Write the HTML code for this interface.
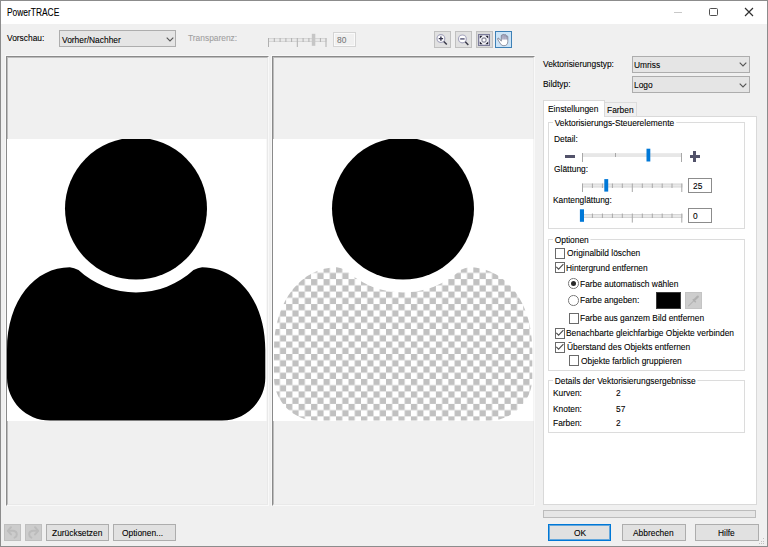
<!DOCTYPE html>
<html><head><meta charset="utf-8">
<style>
*{box-sizing:border-box;margin:0;padding:0}
html,body{width:768px;height:547px;overflow:hidden;background:#f0f0f0}
body{position:relative;font-family:"Liberation Sans",sans-serif;font-size:8.4px;color:#000;-webkit-text-stroke:0.1px currentColor}
.a{position:absolute}
.t{position:absolute;white-space:nowrap;line-height:10px;height:10px;font-size:9.9px;transform-origin:0 0;transform:scaleX(.85)}
.btn{position:absolute;background:#e1e1e1;border:1px solid #adadad}
.cb{position:absolute;background:#e5e5e5;border:1px solid #adadad}
.chk{position:absolute;width:10.5px;height:10.5px;border:1.3px solid #6a6a6a;background:#fff}
.rad{position:absolute;width:10.5px;height:10.5px;border:1.4px solid #7a7a7a;border-radius:50%;background:#fff}
.grp{position:absolute;border:1px solid #dcdcdc}
.gl{position:absolute;background:#fff;padding:0 2px;line-height:10px;height:10px;white-space:nowrap;font-size:9.9px;transform-origin:0 0;transform:scaleX(.85)}
</style></head><body>
<!-- window frame -->
<div class="a" style="left:0;top:0;width:768px;height:547px;border:1px solid #8c8c8c"></div>
<div class="a" style="left:1px;top:1px;width:766px;height:23px;background:#fff"></div>
<div class="t" style="left:7px;top:8px;font-size:10px;transform:scaleX(.84)">PowerTRACE</div>
<!-- title buttons -->
<div class="a" style="left:674px;top:12px;width:8px;height:1px;background:#c8c8c8"></div>
<div class="a" style="left:709.2px;top:7.5px;width:8.6px;height:8.3px;border:1.3px solid #505050;border-radius:1.5px"></div>
<svg class="a" style="left:744px;top:7px" width="10" height="10" viewBox="0 0 10 10"><path d="M1 1L9 9M9 1L1 9" stroke="#303030" stroke-width="1.15"/></svg>

<!-- toolbar -->
<div class="t" style="left:7px;top:33px">Vorschau:</div>
<div class="cb" style="left:59px;top:30px;width:117px;height:17px"></div>
<div class="t" style="left:62px;top:35px">Vorher/Nachher</div>
<svg class="a" style="left:165.5px;top:37px" width="8" height="5" viewBox="0 0 8 5"><path d="M0.7 0.6L4 3.9L7.3 0.6" stroke="#555" stroke-width="1.1" fill="none"/></svg>
<div class="t" style="left:188px;top:33px;color:#a0a0a0">Transparenz:</div>

<!-- panes -->
<div class="a" style="left:5px;top:55px;width:265px;height:452px;border:1px solid;border-color:#f8f8f8 #f0f0f0 #f0f0f0 #f8f8f8"></div>
<div class="a" style="left:6px;top:56px;width:263px;height:450px;border:1px solid;border-color:#8a8a8a #f9f9f9 #f9f9f9 #8a8a8a"></div>
<div class="a" style="left:7px;top:57px;width:261px;height:448px;border:1px solid;border-color:#bdbdbd #e9e9e9 #e9e9e9 #bdbdbd"></div>
<div class="a" style="left:271px;top:55px;width:265px;height:452px;border:1px solid;border-color:#f8f8f8 #f0f0f0 #f0f0f0 #f8f8f8"></div>
<div class="a" style="left:272px;top:56px;width:263px;height:450px;border:1px solid;border-color:#8a8a8a #f9f9f9 #f9f9f9 #8a8a8a"></div>
<div class="a" style="left:273px;top:57px;width:261px;height:448px;border:1px solid;border-color:#bdbdbd #e9e9e9 #e9e9e9 #bdbdbd"></div>

<!-- right panel -->
<div class="t" style="left:543px;top:59px">Vektorisierungstyp:</div>
<div class="cb" style="left:632px;top:56px;width:118px;height:17px"></div>
<div class="t" style="left:634px;top:60px">Umriss</div>
<div class="t" style="left:543px;top:79px">Bildtyp:</div>
<div class="cb" style="left:632px;top:76px;width:118px;height:17px"></div>
<div class="t" style="left:634px;top:80px">Logo</div>

<!-- tab panel -->
<div class="a" style="left:543px;top:116px;width:214px;height:389px;background:#fff;border:1px solid #d9d9d9"></div>


<!-- tabs -->
<div class="a" style="left:604px;top:102px;width:33px;height:15px;background:#f0f0f0;border:1px solid #dcdcdc"></div>
<div class="t" style="left:607px;top:105px">Farben</div>
<div class="a" style="left:543px;top:100px;width:62px;height:17px;background:#fff;border:1px solid #d9d9d9;border-bottom:none"></div>
<div class="t" style="left:548px;top:104px">Einstellungen</div>

<!-- group 1 -->
<div class="grp" style="left:548px;top:122px;width:197px;height:107px"></div>
<div class="gl" style="left:553px;top:118px">Vektorisierungs-Steuerelemente</div>
<div class="t" style="left:554px;top:134px">Detail:</div>
<div class="a" style="left:565px;top:155px;width:10px;height:3px;background:#52526a"></div>
<div class="a" style="left:690px;top:155px;width:9.5px;height:3px;background:#52526a"></div>
<div class="a" style="left:693px;top:151px;width:3px;height:11px;background:#52526a"></div>
<div class="t" style="left:554px;top:164px">Glättung:</div>
<div class="t" style="left:553px;top:195px">Kantenglättung:</div>
<div class="a" style="left:688px;top:178px;width:24px;height:15px;border:1px solid #8c8c8c;background:#fff"></div>
<div class="t" style="left:693px;top:181px">25</div>
<div class="a" style="left:688px;top:208px;width:24px;height:15px;border:1px solid #8c8c8c;background:#fff"></div>
<div class="t" style="left:693px;top:211px">0</div>

<!-- group 2 -->
<div class="grp" style="left:548px;top:239px;width:197px;height:132px"></div>
<div class="gl" style="left:553px;top:235px">Optionen</div>
<div class="chk" style="left:554.5px;top:248px"></div>
<div class="t" style="left:567px;top:248px">Originalbild löschen</div>
<div class="chk" style="left:554.5px;top:262px"></div>
<div class="t" style="left:566px;top:263px">Hintergrund entfernen</div>
<div class="rad" style="left:568px;top:278px"></div>
<div class="a" style="left:571px;top:280.8px;width:5px;height:5px;border-radius:50%;background:#2a2a2a"></div>
<div class="t" style="left:580px;top:279px">Farbe automatisch wählen</div>
<div class="rad" style="left:568px;top:295px"></div>
<div class="t" style="left:580px;top:295px">Farbe angeben:</div>
<div class="a" style="left:656px;top:292px;width:25px;height:17px;background:#000;border:1px solid #3a3a3a"></div>
<div class="a" style="left:685px;top:292px;width:17px;height:17px;background:#cdcdcd;border:1px solid #c4c4c4"></div>
<div class="chk" style="left:568.5px;top:313px"></div>
<div class="t" style="left:580px;top:313px">Farbe aus ganzem Bild entfernen</div>
<div class="chk" style="left:554.5px;top:328px"></div>
<div class="t" style="left:566px;top:328px">Benachbarte gleichfarbige Objekte verbinden</div>
<div class="chk" style="left:554.5px;top:342px"></div>
<div class="t" style="left:567px;top:342px">Überstand des Objekts entfernen</div>
<div class="chk" style="left:568.5px;top:355px"></div>
<div class="t" style="left:581px;top:356px">Objekte farblich gruppieren</div>

<!-- group 3 -->
<div class="grp" style="left:548px;top:380px;width:197px;height:53px"></div>
<div class="gl" style="left:553px;top:376px">Details der Vektorisierungsergebnisse</div>
<div class="t" style="left:553px;top:388px">Kurven:</div><div class="t" style="left:616px;top:388px">2</div>
<div class="t" style="left:553px;top:404px">Knoten:</div><div class="t" style="left:616px;top:404px">57</div>
<div class="t" style="left:553px;top:418px">Farben:</div><div class="t" style="left:616px;top:418px">2</div>


<svg class="a" style="left:0;top:0" width="768" height="547" viewBox="0 0 768 547">
<defs>
<pattern id="chk" x="11.56" y="4.54" width="12.48" height="12.48" patternUnits="userSpaceOnUse">
<rect width="12.48" height="12.48" fill="#fff"/><rect width="6.24" height="6.24" fill="#c1c1c1"/><rect x="6.24" y="6.24" width="6.24" height="6.24" fill="#c1c1c1"/>
</pattern>
<clipPath id="c1"><rect x="7" y="139" width="259.5" height="282"/></clipPath>
<clipPath id="c2"><rect x="273" y="139" width="260.5" height="282"/></clipPath>
</defs>
<rect x="7" y="139" width="259.5" height="282" fill="#fff"/>
<g clip-path="url(#c1)">
<circle cx="136" cy="208.6" r="71" fill="#000"/>
<path d="M 69.90 267.3 Q 74.00 267.9 78.50 269.9 A 84.3 84.3 0 0 0 193.50 269.9 Q 198.00 267.9 202.10 267.3 C 237.00 267.3, 265.30 300, 265.30 350 L 265.30 378 C 265.30 401, 246.00 420.6, 222.00 420.6 L 50.00 420.6 C 26.00 420.6, 7.00 401, 7.00 378 L 7.00 350 C 7.00 300, 35.30 267.3, 69.90 267.3 Z" fill="#000"/>
</g>
<rect x="273" y="139" width="260.5" height="282" fill="#fff"/>
<g clip-path="url(#c2)">
<circle cx="403" cy="208.6" r="71" fill="#000"/>
<path d="M 336.90 267.3 Q 341.00 267.9 345.50 269.9 A 84.3 84.3 0 0 0 460.50 269.9 Q 465.00 267.9 469.10 267.3 C 504.00 267.3, 532.30 300, 532.30 350 L 532.30 378 C 532.30 401, 513.00 420.6, 489.00 420.6 L 317.00 420.6 C 293.00 420.6, 274.00 401, 274.00 378 L 274.00 350 C 274.00 300, 302.30 267.3, 336.90 267.3 Z" fill="url(#chk)"/>
</g>

<!-- top slider -->
<rect x="268.5" y="38.5" width="57.5" height="3" fill="#e9e9e9" stroke="#d6d6d6" stroke-width="1"/>
<g stroke="#b0b0b0" stroke-width="1">
<path d="M268.5 38 V47 M297.3 38 V47 M326 38 V47"/>
<path d="M274.3 38 V42 M280.1 38 V42 M285.9 38 V42 M291.6 38 V42 M303.1 38 V42 M308.9 38 V42 M320.4 38 V42"/>
</g>
<rect x="311.8" y="33.8" width="3.5" height="12" fill="#c6c6c6"/>

<!-- detail slider -->
<rect x="582" y="153.2" width="100" height="3.8" fill="#e7e7e7"/>
<g stroke="#a8a8a8" stroke-width="1">
<path d="M582.5 153 V162 M681.5 153 V162 M615.5 153 V157"/>
</g>
<rect x="646.5" y="148.7" width="3.8" height="12.8" fill="#0078d7"/>

<!-- glaettung slider -->
<rect x="582.5" y="184" width="99.5" height="3" fill="#e9e9e9" stroke="#d6d6d6" stroke-width="1"/>
<g stroke="#a8a8a8" stroke-width="1">
<path d="M582.5 183.5 V192 M632.3 183.5 V192 M681.8 183.5 V192"/>
<path d="M592.4 183.5 V188 M602.4 183.5 V188 M612.4 183.5 V188 M622.3 183.5 V188 M642.3 183.5 V188 M652.3 183.5 V188 M662.2 183.5 V188 M672 183.5 V188"/>
</g>
<rect x="604.3" y="179.1" width="3.9" height="12.5" fill="#0078d7"/>

<!-- kantenglaettung slider -->
<rect x="582.5" y="214.5" width="99.5" height="3" fill="#e9e9e9" stroke="#d6d6d6" stroke-width="1"/>
<g stroke="#a8a8a8" stroke-width="1">
<path d="M632.3 213.5 V222.6 M681.8 213.5 V222.6"/>
<path d="M592.4 213.5 V218 M602.4 213.5 V218 M612.4 213.5 V218 M622.3 213.5 V218 M642.3 213.5 V218 M652.3 213.5 V218 M662.2 213.5 V218 M672 213.5 V218"/>
</g>
<rect x="579.9" y="209.3" width="4.1" height="12.5" fill="#0078d7"/>

<!-- checks -->
<g stroke="#4a4a4a" stroke-width="1.1" fill="none">
<path d="M556.3 266.8 L558.6 269.2 L563.4 264.1"/>
<path d="M556.3 332.8 L558.6 335.2 L563.4 330.1"/>
<path d="M556.3 346.8 L558.6 349.2 L563.4 344.1"/>
</g>
<!-- eyedropper -->
<path d="M688.3 306.2 L694.2 300.3" stroke="#b4b4b4" stroke-width="1.1" fill="none"/>
<path d="M692.8 299.2 L695.8 302.2" stroke="#b0b0b0" stroke-width="1.3" fill="none"/>
<path d="M694.6 299.8 L697.8 296.6" stroke="#b0b0b0" stroke-width="2.2" stroke-linecap="round" fill="none"/>
</svg>


<!-- transparency field -->
<div class="a" style="left:332.5px;top:32px;width:23.5px;height:14.5px;border:1px solid #d4d4d4;background:#f0f0f0;box-shadow:inset 0 0 0 1px #fafafa"></div>
<div class="t" style="left:337px;top:35px;color:#7a7a7a">80</div>
<!-- zoom buttons -->
<div class="btn" style="left:434px;top:31px;width:17px;height:17px;border-color:#c0c0c0"></div>
<div class="btn" style="left:455px;top:31px;width:17px;height:17px;border-color:#c0c0c0"></div>
<div class="btn" style="left:476px;top:31px;width:17px;height:17px;border-color:#c0c0c0;background:#dadada"></div>
<div class="a" style="left:494.6px;top:31.1px;width:17.3px;height:17.2px;border:1.2px solid #3d80b6;background:#cce4f7"></div>
<svg class="a" style="left:0;top:0" width="768" height="60" viewBox="0 0 768 60">
<!-- zoom in -->
<circle cx="440.9" cy="38.6" r="3.9" fill="#fff" stroke="#a6a6be" stroke-width="1.2"/>
<path d="M443.8 41.5 L446.8 44.6" stroke="#3a3a4a" stroke-width="1.5"/>
<path d="M438.7 38.6 H443.1 M440.9 36.4 V40.8" stroke="#34344e" stroke-width="1.4"/>
<!-- zoom out -->
<circle cx="462.4" cy="38.9" r="3.9" fill="#fff" stroke="#a6a6be" stroke-width="1.2"/>
<path d="M465.3 41.8 L468.3 44.9" stroke="#3a3a4a" stroke-width="1.5"/>
<path d="M460.2 38.9 H464.6" stroke="#5e5e7c" stroke-width="1.5"/>
<!-- fit -->
<rect x="478.5" y="34.5" width="11" height="11" fill="#f2f2f6" stroke="#7c7c9a" stroke-width="1"/>
<rect x="479.5" y="35.5" width="9" height="9" fill="none" stroke="#cfcfdc" stroke-width="0.8"/>
<path d="M479.8 35.8 h2.8 L479.8 38.6Z M488.2 35.8 h-2.8 L488.2 38.6Z M479.8 44.2 h2.8 L479.8 41.4Z M488.2 44.2 h-2.8 L488.2 41.4Z" fill="#1c1c2c"/>
<circle cx="484" cy="40" r="2.1" fill="#fff" stroke="#8a8a9c" stroke-width="1.1"/>
<!-- hand -->
<defs><linearGradient id="hg" x1="0" y1="0" x2="0" y2="1"><stop offset="0" stop-color="#a9abc6"/><stop offset="0.42" stop-color="#c8cadc"/><stop offset="0.5" stop-color="#fff"/><stop offset="1" stop-color="#fff"/></linearGradient></defs>
<path d="M501.3 41.2 L499.2 38.6 C498.3 37.6 497 38.5 497.8 39.6 L500.6 44 C501.5 45.3 502.7 45.7 504 45.7 C506.5 45.7 507.8 44 507.8 41.5 L507.8 36.8 C507.8 35.8 506.6 35.6 506.3 36.4 L506.3 35.6 C506.3 34.6 505 34.4 504.8 35.2 C504.7 34.2 503.2 34.1 503 35 C502.8 34.6 501.3 34.8 501.3 35.8 Z" fill="url(#hg)" stroke="#6c6c7c" stroke-width="0.7"/>
<path d="M503 35.2 V39.3 M504.8 35.2 V39.3 M506.3 36.2 V39.3" stroke="#8c8ca4" stroke-width="0.6"/>
<!-- combo chevron top -->
</svg>
<svg class="a" style="left:739px;top:62px" width="8" height="5" viewBox="0 0 8 5"><path d="M0.7 0.6L4 3.9L7.3 0.6" stroke="#555" stroke-width="1.1" fill="none"/></svg>
<svg class="a" style="left:739px;top:82.5px" width="8" height="5" viewBox="0 0 8 5"><path d="M0.7 0.6L4 3.9L7.3 0.6" stroke="#555" stroke-width="1.1" fill="none"/></svg>
<!-- bottom -->
<div class="btn" style="left:4px;top:523.6px;width:17px;height:17.2px;background:#cccccc;border-color:#bfbfbf"></div>
<div class="btn" style="left:25px;top:523.6px;width:17px;height:17.2px;background:#cccccc;border-color:#bfbfbf"></div>
<div class="btn" style="left:46px;top:523.6px;width:63px;height:17.2px"></div>
<div class="t" style="left:52px;top:528px">Zurücksetzen</div>
<div class="btn" style="left:113px;top:523.6px;width:63px;height:17.2px"></div>
<div class="t" style="left:122px;top:528px">Optionen...</div>
<div class="a" style="left:543px;top:510px;width:213px;height:8px;background:#e6e6e6;border:1px solid #bcbcbc"></div>
<div class="btn" style="left:548.2px;top:523.6px;width:63.2px;height:17.2px;border:1px solid #0078d7;box-shadow:inset 0 0 0 1px rgba(0,120,215,.55)"></div>
<div class="t" style="left:574px;top:528px">OK</div>
<div class="btn" style="left:622px;top:523.6px;width:64px;height:17.2px"></div>
<div class="t" style="left:633px;top:528px">Abbrechen</div>
<div class="btn" style="left:695px;top:523.6px;width:64px;height:17.2px"></div>
<div class="t" style="left:718px;top:528px">Hilfe</div>
<!-- undo redo icons -->
<svg class="a" style="left:0;top:520px" width="50" height="27" viewBox="0 520 50 27">
<g stroke="#bcbcbc" stroke-width="2" fill="none" stroke-linecap="round" stroke-linejoin="round">
<path d="M11 527.2 L7.8 530.8 L11 534.4"/>
<path d="M8.6 530.8 H12.5 C15.3 530.8 16.8 532.5 16.8 534.4 C16.8 535.9 16 537 14.6 537.6"/>
<path d="M35 527.2 L38.2 530.8 L35 534.4"/>
<path d="M37.4 530.8 H33.5 C30.7 530.8 29.2 532.5 29.2 534.4 C29.2 535.9 30 537 31.4 537.6"/>
</g>
</svg>
<!-- grip -->
<div class="a" style="left:763px;top:538px;width:1px;height:1px;background:#c0c0c0"></div>
<div class="a" style="left:761px;top:541px;width:1px;height:1px;background:#c0c0c0"></div>
<div class="a" style="left:763px;top:541px;width:1px;height:1px;background:#c0c0c0"></div>
<div class="a" style="left:759px;top:543px;width:1px;height:1px;background:#c0c0c0"></div>
<div class="a" style="left:761px;top:543px;width:1px;height:1px;background:#c0c0c0"></div>
<div class="a" style="left:763px;top:543px;width:1px;height:1px;background:#c0c0c0"></div>

</body></html>
